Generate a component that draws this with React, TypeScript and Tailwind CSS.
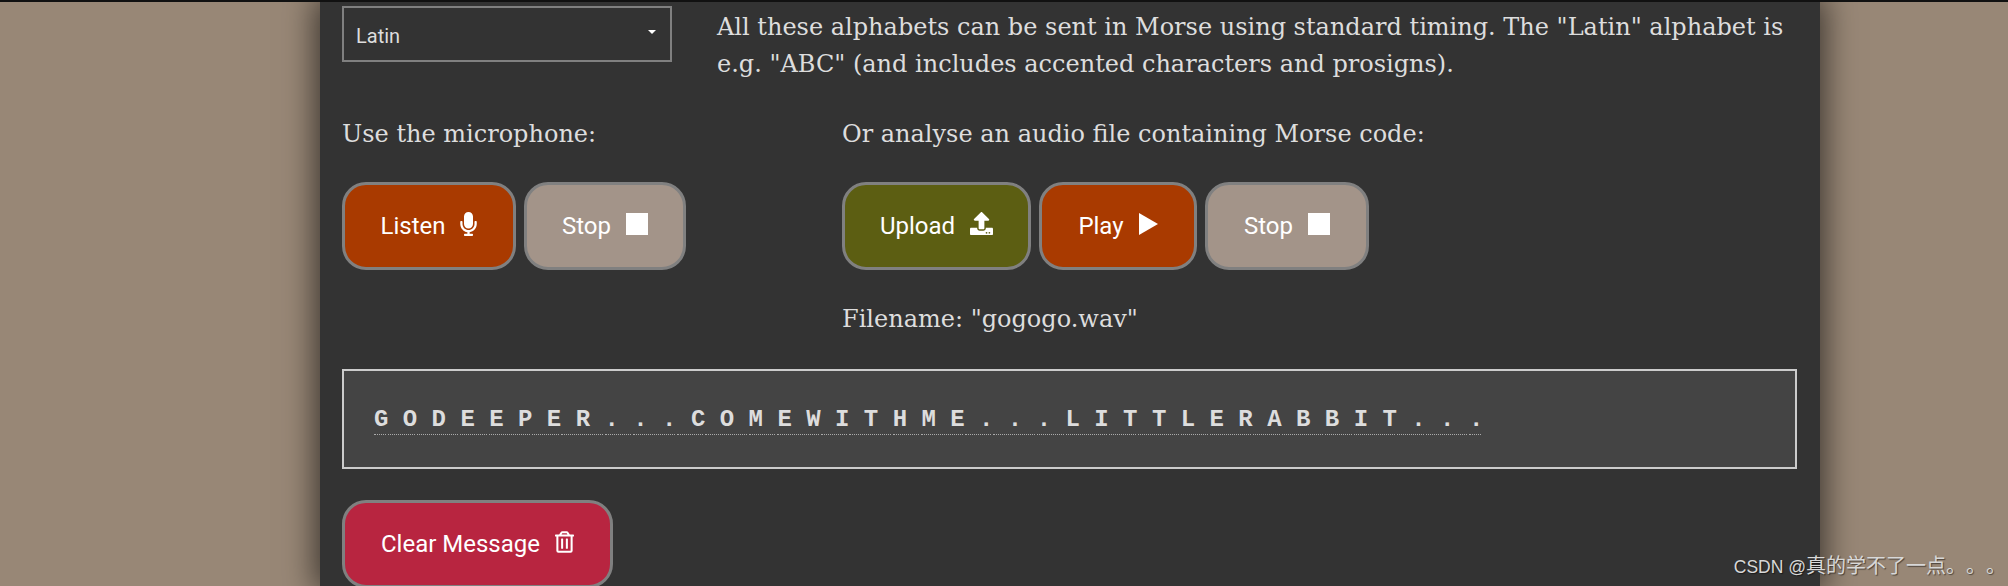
import React from 'react';

import { FaMicrophone, FaRegTrashAlt, FaUpload } from 'react-icons/fa';

const MESSAGE = 'G O D E E P E R . . . C O M E W I T H M E . . . L I T T L E R A B B I T . . .';

// the decoded text comes in runs of 1, 2, 3, 2, 3... characters, each with its own dotted underline
const splitMessage = () => {
  const parts: string[] = [MESSAGE.slice(0, 1)];
  let i = 1;
  let size = 2;
  while (i < MESSAGE.length) {
    parts.push(MESSAGE.slice(i, i + size));
    i += size;
    size = size === 2 ? 3 : 2;
  }
  return parts;
};

const StopIcon = () => <span className="mb-[5px] block size-[22px] bg-white" />;

const PlayIcon = () => (
  <svg viewBox="0 0 19 22" className="mb-[5px] h-[22px] w-[19px] fill-white">
    <polygon points="0,0 19,11 0,22" />
  </svg>
);

const Button = ({ label, color, width, children }: { label: string; color: string; width: string; children: React.ReactNode }) => (
  <button className={`flex h-[88px] items-center justify-center gap-[15px] rounded-[24px] border-[3px] border-[#808080] font-['Roboto',sans-serif] text-[24px] text-white ${color} ${width}`}>
    <span>{label}</span>
    {children}
  </button>
);

const App = () => {
  return (
    <div className="relative h-[586px] w-[2008px] overflow-hidden border-t-2 border-[#111111] bg-[#988776]">
      <div className="ml-[320px] h-full w-[1500px] bg-[#333333] pl-[22px] pr-[23px] pt-[4px] font-['DejaVu_Serif',serif] text-[24px] leading-[37px] text-[#dddddd] shadow-[0_0_30px_5px_rgba(0,0,0,0.6)]">
        <div className="flex items-start">
          <div className="flex h-[56px] w-[330px] shrink-0 items-center justify-between border-2 border-[#808080] pl-[12px] pr-[14px] pt-[5px] font-['Roboto',sans-serif] text-[20px] text-[#dddddd]">
            <span>Latin</span>
            <span className="mb-[9px] h-0 w-0 border-x-[4px] border-t-[4px] border-x-transparent border-t-white" />
          </div>
          <p className="ml-[45px] mt-[3px]">
            All these alphabets can be sent in Morse using standard timing. The "Latin" alphabet is e.g. "ABC" (and includes accented characters and prosigns).
          </p>
        </div>

        <div className="mt-[33px] flex">
          <div className="w-[500px] shrink-0">
            <p>Use the microphone:</p>
            <div className="mt-[29px] flex gap-[8px]">
              <Button label="Listen" color="bg-[#a93a00]" width="w-[174px]">
                <FaMicrophone className="mb-[5px] h-[24px] w-[17px]" />
              </Button>
              <Button label="Stop" color="bg-[#a39489]" width="w-[162px]">
                <StopIcon />
              </Button>
            </div>
          </div>
          <div>
            <p>Or analyse an audio file containing Morse code:</p>
            <div className="mt-[29px] flex gap-[8px]">
              <Button label="Upload" color="bg-[#5c5e12]" width="w-[189px]">
                <FaUpload className="mb-[5px] h-[23px] w-[23px]" />
              </Button>
              <Button label="Play" color="bg-[#a93a00]" width="w-[158px]">
                <PlayIcon />
              </Button>
              <Button label="Stop" color="bg-[#a39489]" width="w-[164px]">
                <StopIcon />
              </Button>
            </div>
            <p className="mt-[31px]">Filename: "gogogo.wav"</p>
          </div>
        </div>

        <div className="mt-[31px] flex h-[100px] items-center whitespace-pre border-2 border-[#cccccc] bg-[#444444] pl-[30px] pt-[2px] font-['Liberation_Mono',monospace] text-[24px] font-bold leading-[30px] text-[#dddddd]">
          {splitMessage().map((part, i) => (
            <span key={i} className="relative after:absolute after:bottom-0 after:left-0 after:right-[2px] after:border-b after:border-dotted after:border-[#aaaaaa]">
              {part}
            </span>
          ))}
        </div>

        <div className="mt-[31px]">
          <Button label="Clear Message" color="bg-[#b82540]" width="w-[271px]">
            <FaRegTrashAlt className="mb-[5px] h-[22px] w-[19px]" />
          </Button>
        </div>
      </div>

      <span className="absolute bottom-[6px] right-[2px] whitespace-nowrap font-['Liberation_Sans','Noto_Sans_CJK_SC',sans-serif] text-[20px] leading-[26px] text-[#d8d8d8] [text-shadow:1px_1px_1px_rgba(0,0,0,0.5)] [text-spacing-trim:space-all]">
        <span className="text-[17.5px]">CSDN @</span>真的学不了一点。。。
      </span>
    </div>
  );
};

export default App;
